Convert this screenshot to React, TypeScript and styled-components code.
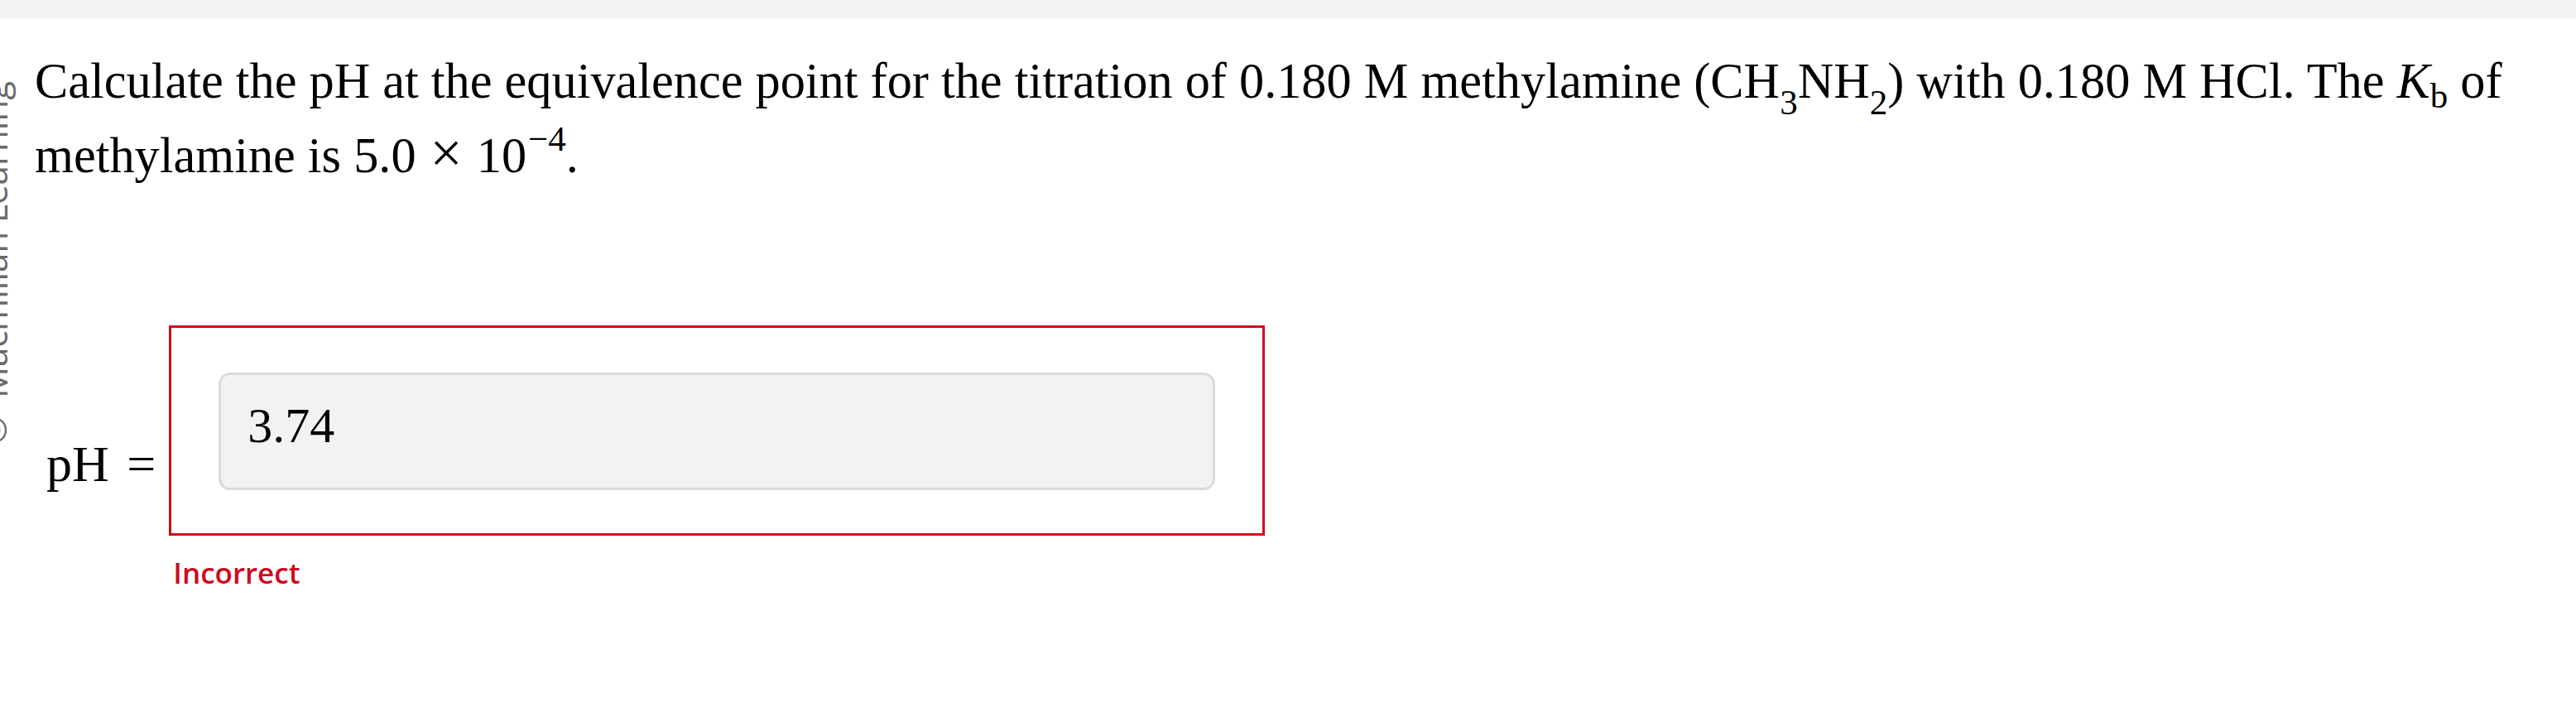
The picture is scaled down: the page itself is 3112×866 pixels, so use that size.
import React from "react";
import styled, { createGlobalStyle } from "styled-components";

const GlobalStyle = createGlobalStyle`
  html, body {
    margin: 0;
    padding: 0;
    background: #ffffff;
  }
  body {
    font-family: "Liberation Serif", "Times New Roman", serif;
    color: #000;
  }
`;

const Page = styled.div`
  position: relative;
  min-height: 866px;
  overflow: hidden;
  background: #ffffff;
`;

const TopBar = styled.div`
  height: 22px;
  background: #f2f2f2;
`;

const Content = styled.div`
  padding: 31px 40px 0 42px;
`;

const Watermark = styled.div`
  position: absolute;
  top: 98px;
  left: -28px;
  writing-mode: vertical-rl;
  transform: rotate(180deg);
  font-family: "Open Sans", "Liberation Sans", sans-serif;
  font-size: 42px;
  line-height: 42px;
  color: #6a6a6a;
  white-space: nowrap;
`;

const Question = styled.p`
  margin: 0;
  font-size: 60.3px;
  line-height: 90px;
  max-width: 3031px;
`;

const Sub = styled.sub<{ $drop: number }>`
  font-size: 43px;
  line-height: 0;
  vertical-align: ${(p) => -p.$drop}px;
`;

const Sup = styled.sup`
  font-size: 43px;
  line-height: 0;
  vertical-align: 26px;
  margin-left: 2px;
`;

const MathVar = styled.i`
  font-style: italic;
`;

const Times = styled.span`
  display: inline-block;
  font-size: 1.15em;
  line-height: 0;
  margin: 0 2px;
`;

const AnswerRow = styled.div`
  display: flex;
  align-items: flex-start;
  margin-top: 160px;
`;

const Label = styled.div`
  margin: 136px 16px 0 14px;
  font-size: 62px;
  line-height: 62px;
  word-spacing: 6px;
  white-space: nowrap;
`;

const AnswerColumn = styled.div`
  display: flex;
  flex-direction: column;
  align-items: flex-start;
`;

const ResultBox = styled.div`
  box-sizing: border-box;
  width: 1324px;
  height: 254px;
  border: 3px solid #cf0a1e;
  padding: 54px 57px 0 57px;
`;

const AnswerInput = styled.div`
  box-sizing: border-box;
  height: 142px;
  border: 3px solid #dadada;
  border-radius: 14px;
  background: #f2f2f2;
  padding: 30px 32px 0 32px;
  font-size: 60px;
  line-height: 62px;
`;

const Feedback = styled.div`
  margin: 28px 0 0 5px;
  font-family: "Open Sans", "Liberation Sans", sans-serif;
  font-weight: 600;
  font-size: 35px;
  line-height: 34px;
  color: #cf0a1e;
`;

export default function App() {
  return (
    <Page>
      <GlobalStyle />
      <TopBar />
      <Watermark>© Macmillan Learning</Watermark>
      <Content>
        <Question>
          Calculate the pH at the equivalence point for the titration of 0.180 M methylamine (CH
          <Sub $drop={20}>3</Sub>NH<Sub $drop={20}>2</Sub>) with 0.180 M HCl. The{" "}
          <MathVar>K</MathVar>
          <Sub $drop={12}>b</Sub> of methylamine is 5.0 <Times>×</Times> 10<Sup>−4</Sup>.
        </Question>
        <AnswerRow>
          <Label>pH =</Label>
          <AnswerColumn>
            <ResultBox>
              <AnswerInput>3.74</AnswerInput>
            </ResultBox>
            <Feedback>Incorrect</Feedback>
          </AnswerColumn>
        </AnswerRow>
      </Content>
    </Page>
  );
}
